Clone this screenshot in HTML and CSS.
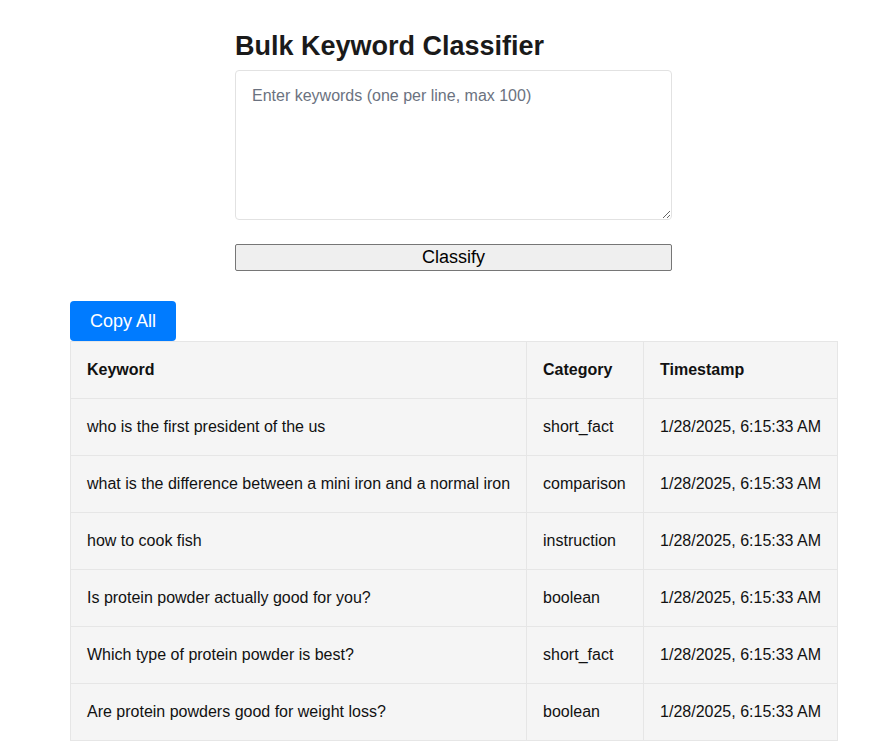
FILE: index.html
```html
<!DOCTYPE html>
<html lang="en">
<head>
<meta charset="utf-8">
<title>Bulk Keyword Classifier</title>
<link rel="stylesheet" href="styles.css">
</head>
<body>
<div class="page">
  <section class="form">
    <h1 class="title">Bulk Keyword Classifier</h1>
    <textarea class="input" placeholder="Enter keywords (one per line, max 100)"></textarea>
    <button class="classify">Classify</button>
  </section>
  <div class="results">
    <button class="copy">Copy All</button>
    <table class="table">
      <thead>
        <tr><th>Keyword</th><th class="col-category">Category</th><th>Timestamp</th></tr>
      </thead>
      <tbody>
        <tr><td>who is the first president of the us</td><td>short_fact</td><td>1/28/2025, 6:15:33 AM</td></tr>
        <tr><td>what is the difference between a mini iron and a normal iron</td><td>comparison</td><td>1/28/2025, 6:15:33 AM</td></tr>
        <tr><td>how to cook fish</td><td>instruction</td><td>1/28/2025, 6:15:33 AM</td></tr>
        <tr><td>Is protein powder actually good for you?</td><td>boolean</td><td>1/28/2025, 6:15:33 AM</td></tr>
        <tr><td>Which type of protein powder is best?</td><td>short_fact</td><td>1/28/2025, 6:15:33 AM</td></tr>
        <tr><td>Are protein powders good for weight loss?</td><td>boolean</td><td>1/28/2025, 6:15:33 AM</td></tr>
      </tbody>
    </table>
  </div>
</div>
</body>
</html>
```
FILE: styles.css
```css
html, body {
  margin: 0;
  padding: 0;
  background: #fff;
}
body {
  font-family: "Liberation Sans", Arial, sans-serif;
  color: #111;
  line-height: 1.5;
}
.page {
  padding: 30px 0 0 70px;
}
.form {
  margin-left: 165px;
  width: 437px;
  display: flex;
  flex-direction: column;
}
.title {
  margin: 0 0 8px;
  font-size: 27px;
  line-height: 1.2;
  font-weight: bold;
  color: #1a1a1a;
}
.input {
  box-sizing: border-box;
  width: 437px;
  height: 150px;
  margin: 0;
  padding: 13px 16px 12px;
  border: 1px solid #e2e2e2;
  border-radius: 4px;
  font-family: "Liberation Sans", Arial, sans-serif;
  font-size: 16px;
  line-height: 1.5;
  color: #111;
  resize: vertical;
}
.input::placeholder {
  color: #6b7280;
}
.classify {
  box-sizing: border-box;
  margin-top: 24px;
  width: 437px;
  height: 27px;
  padding: 0 6px;
  font-family: "Liberation Sans", Arial, sans-serif;
  font-size: 18px;
  line-height: normal;
  color: #000;
  background: #efefef;
  border: 1px solid #767676;
  border-radius: 2px;
}
.results {
  margin-top: 30px;
}
.copy {
  display: block;
  height: 40px;
  padding: 0 20px;
  font-family: "Liberation Sans", Arial, sans-serif;
  font-size: 18px;
  line-height: normal;
  color: #fff;
  background: #007bff;
  border: none;
  border-radius: 4px;
}
.table {
  border-collapse: collapse;
  background: #f5f5f5;
  font-size: 16px;
}
.table th,
.table td {
  border: 1px solid #e6e6e6;
  padding: 16px;
  text-align: left;
  white-space: nowrap;
  line-height: 24px;
}
.table th {
  font-weight: bold;
}
.table .col-category {
  width: 84px;
}
```
